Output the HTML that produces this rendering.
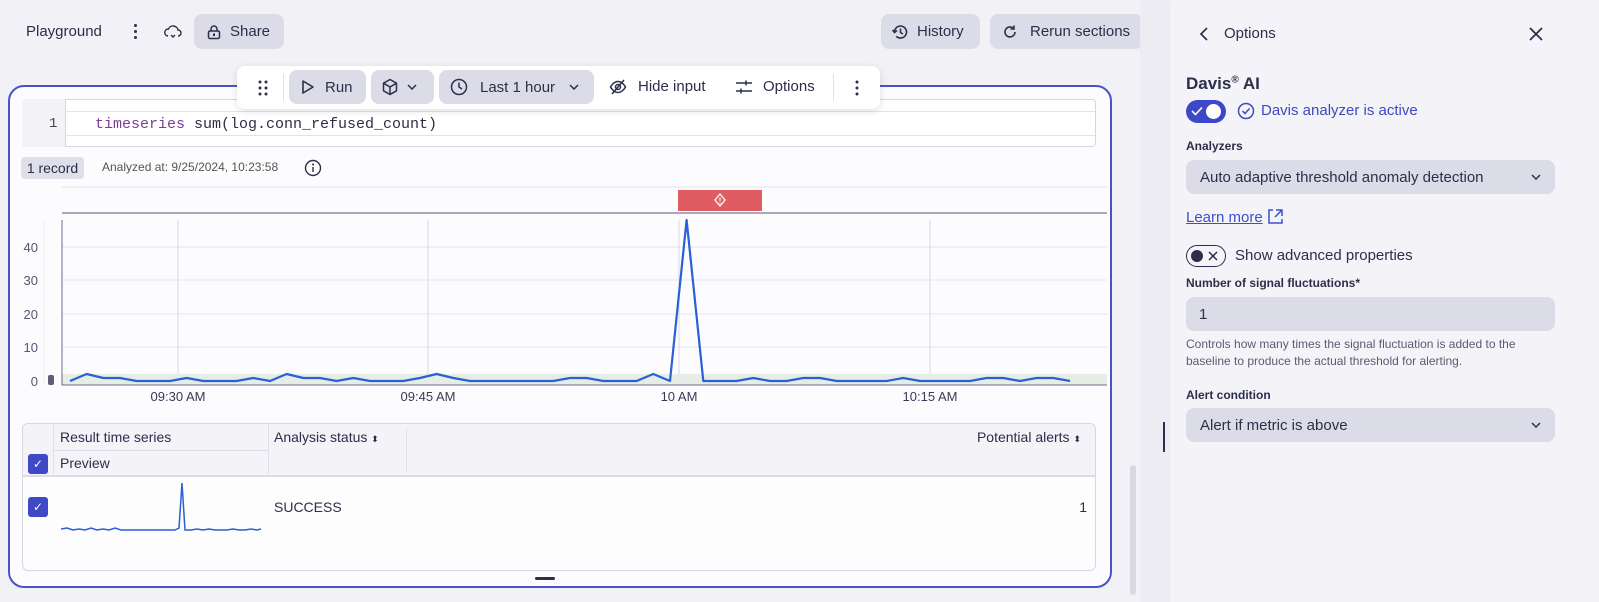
<!DOCTYPE html><html><head><meta charset="utf-8"><style>
*{box-sizing:border-box;margin:0;padding:0}
body{width:1599px;height:602px;overflow:hidden;background:#f1f1f6;font-family:"Liberation Sans",sans-serif;color:#2c2e4a;position:relative;font-size:14px}
.a{position:absolute}
.btn{position:absolute;background:#dcdce8;border-radius:8px;display:flex;align-items:center;font-size:15px;color:#2c2e4a}
svg{display:block}
.tb span{font-size:15px}
</style></head><body>
<div class="a" style="left:26px;top:23px;font-size:15px">Playground</div>
<div class="a" style="left:134px;top:24px;width:4px"><div style="width:3px;height:3px;background:#2c2e4a;border-radius:50%;margin-bottom:3px"></div><div style="width:3px;height:3px;background:#2c2e4a;border-radius:50%;margin-bottom:3px"></div><div style="width:3px;height:3px;background:#2c2e4a;border-radius:50%"></div></div>
<svg class="a" style="left:164px;top:24px" width="18" height="16" viewBox="0 0 18 16"><path d="M4 12a3.5 3.5 0 0 1 .5-7A5 5 0 0 1 14 6a3 3 0 0 1 0 6" fill="none" stroke="#2c2e4a" stroke-width="1.4"/><path d="M7 11l2 2 2-2" fill="none" stroke="#2c2e4a" stroke-width="1.4"/></svg>
<div class="btn" style="left:194px;top:14px;width:90px;height:35px"><svg style="margin:0 8px 0 12px" width="16" height="16" viewBox="0 0 16 16"><rect x="2.5" y="7" width="11" height="7.5" rx="1.5" fill="none" stroke="#2c2e4a" stroke-width="1.5"/><path d="M5 7V5a3 3 0 0 1 6 0v2" fill="none" stroke="#2c2e4a" stroke-width="1.5"/><rect x="7" y="9.5" width="2" height="2.5" fill="#2c2e4a"/></svg>Share</div>
<div class="btn" style="left:881px;top:14px;width:99px;height:35px"><svg style="margin:0 8px 0 10px" width="18" height="18" viewBox="0 0 18 18"><path d="M3.5 9a6 6 0 1 1 1.8 4.3" fill="none" stroke="#2c2e4a" stroke-width="1.6"/><path d="M1.5 7l2 2.5 2.5-2" fill="none" stroke="#2c2e4a" stroke-width="1.6"/><path d="M9.5 5.5v4l2.5 1.5" fill="none" stroke="#2c2e4a" stroke-width="1.6"/></svg>History</div>
<div class="btn" style="left:990px;top:14px;width:153px;height:35px"><svg style="margin:0 12px 0 12px" width="16" height="16" viewBox="0 0 16 16"><path d="M13 8a5 5 0 1 1-1.8-3.9" fill="none" stroke="#2c2e4a" stroke-width="1.6"/><path d="M12 1.5v3.5h-3.5" fill="none" stroke="#2c2e4a" stroke-width="1.6"/></svg>Rerun sections</div>

<!-- main card -->
<div class="a" style="left:8px;top:85px;width:1104px;height:503px;border:2px solid #4a52c8;border-radius:16px;background:#fcfcfe"></div>
<div class="a" style="left:22px;top:99px;width:1074px;height:48px;border:1px solid #d6d6e2;border-radius:4px;background:#fff"></div>
<div class="a" style="left:65px;top:99px;width:1px;height:48px;background:#d6d6e2"></div>
<div class="a" style="left:66px;top:111px;width:1029px;height:1px;background:#e2e2ec"></div>
<div class="a" style="left:66px;top:135px;width:1029px;height:1px;background:#e2e2ec"></div>
<div class="a" style="left:22px;top:99px;width:43px;height:48px;background:#f4f4f8"></div>
<div class="a" style="left:49px;top:116px;font-family:'Liberation Mono',monospace;font-size:14px;color:#444">1</div>
<div class="a" style="left:95px;top:116px;font-family:'Liberation Mono',monospace;font-size:15px;color:#2c2e4a"><span style="color:#7d3c98">timeseries</span> sum(log.conn_refused_count)</div>

<div class="a" style="left:21px;top:157px;width:63px;height:22px;background:#dfdfea;border-radius:4px;font-size:14px;line-height:22px;text-align:center">1 record</div>
<div class="a" style="left:102px;top:160px;font-size:12px;color:#555">Analyzed at: 9/25/2024, 10:23:58</div>
<svg class="a" style="left:304px;top:159px" width="18" height="18" viewBox="0 0 18 18"><circle cx="9" cy="9" r="7.5" fill="none" stroke="#2c2e4a" stroke-width="1.4"/><rect x="8.3" y="8" width="1.4" height="5" fill="#2c2e4a"/><circle cx="9" cy="5.5" r="1" fill="#2c2e4a"/></svg>

<!-- chart -->
<svg class="a" style="left:0;top:180px" width="1120" height="230" viewBox="0 180 1120 230">
<line x1="62" y1="187" x2="1107" y2="187" stroke="#e2e2ec"/>
<rect x="678" y="190" width="84" height="21" fill="#e05c63"/>
<path d="M720 194l5 6-5 6-5-6z" fill="none" stroke="#fff" stroke-width="1.3"/><line x1="720" y1="197.5" x2="720" y2="201" stroke="#fff" stroke-width="1.2"/><circle cx="720" cy="203" r=".7" fill="#fff"/>
<line x1="62" y1="213" x2="1107" y2="213" stroke="#8e8ca8" stroke-width="1.5"/>
<g stroke="#e4e4ee"><line x1="62" y1="247" x2="1107" y2="247"/><line x1="62" y1="280" x2="1107" y2="280"/><line x1="62" y1="314" x2="1107" y2="314"/><line x1="62" y1="347" x2="1107" y2="347"/></g>
<g stroke="#d8d8e4"><line x1="178" y1="220" x2="178" y2="385"/><line x1="428" y1="220" x2="428" y2="385"/><line x1="679" y1="220" x2="679" y2="385"/><line x1="930" y1="220" x2="930" y2="385"/></g>
<rect x="62" y="374" width="1045" height="11" fill="#e6ece6"/>
<line x1="62" y1="220" x2="62" y2="385" stroke="#6c6a90"/>
<line x1="62" y1="385" x2="1107" y2="385" stroke="#6c6a90"/>
<line x1="44" y1="220" x2="44" y2="385" stroke="#eee"/>
<rect x="48" y="375" width="6" height="10" rx="2" fill="#5d5d75"/>
<g font-size="13" fill="#555570" text-anchor="end" font-family="Liberation Sans"><text x="38" y="252">40</text><text x="38" y="285">30</text><text x="38" y="319">20</text><text x="38" y="352">10</text><text x="38" y="386">0</text></g>
<g font-size="13" fill="#3a3a55" text-anchor="middle" font-family="Liberation Sans"><text x="178" y="401">09:30 AM</text><text x="428" y="401">09:45 AM</text><text x="679" y="401">10 AM</text><text x="930" y="401">10:15 AM</text></g>
<polyline id="pl" fill="none" stroke="#2a5fd6" stroke-width="2.2" stroke-linejoin="round" points="70,381 86.6,374 103.3,378 120,378 136.6,381 153.3,381 170,381 186.6,378 203.3,381 220,381 236.6,381 253.3,378 270,381 286.6,374 303.3,378 320,378 336.6,381 353.3,378 370,381 386.6,381 403.3,381 420,378 436.6,374 453.3,378 470,381 486.6,381 503.3,381 520,381 536.6,381 553.3,381 570,378 586.6,378 603.3,381 620,381 636.6,381 653.3,374 670,381 686.6,220 703.3,381 720,381 736.6,381 753.3,378 770,381 786.6,381 803.3,378 820,378 836.6,381 853.3,381 870,381 886.6,381 903.3,378 920,381 936.6,381 953.3,381 970,381 986.6,378 1003.3,378 1020,381 1036.6,378 1053.3,378 1070,381"/>
</svg>

<!-- table -->
<div class="a" style="left:22px;top:423px;width:1074px;height:148px;border:1px solid #d6d6e2;border-radius:6px;background:#fdfdfe;overflow:hidden">
 <div class="a" style="left:0;top:0;width:1074px;height:53px;background:#f3f3f8;border-bottom:2px solid #dcdce6"></div>
 <div class="a" style="left:30px;top:0;width:1px;height:50px;background:#e0e0ea"></div>
 <div class="a" style="left:245px;top:0;width:1px;height:50px;background:#e0e0ea"></div>
 <div class="a" style="left:383px;top:4px;width:1px;height:44px;background:#e0e0ea"></div>
 <div class="a" style="left:31px;top:26px;width:214px;height:1px;background:#dcdce6"></div>
 <div class="a" style="left:37px;top:5px;font-size:14px">Result time series</div>
 <div class="a" style="left:37px;top:31px;font-size:14px">Preview</div>
 <div class="a" style="left:251px;top:5px;font-size:14px">Analysis status <span style="font-size:9px">⬍</span></div>
 <div class="a" style="right:14px;top:5px;font-size:14px">Potential alerts <span style="font-size:9px">⬍</span></div>
 <div class="a" style="left:5px;top:30px;width:20px;height:20px;background:#4048c8;border-radius:3px;color:#fff;font-size:12px;text-align:center;line-height:20px">✓</div>
 <div class="a" style="left:5px;top:73px;width:20px;height:20px;background:#4048c8;border-radius:3px;color:#fff;font-size:12px;text-align:center;line-height:20px">✓</div>
 <svg class="a" style="left:38px;top:58px" width="202" height="52"><polyline fill="none" stroke="#2a5fd6" stroke-width="1.5" points="0,47 6,46 12,48 18,47 24,48 30,46 36,48 42,47 48,48 54,46 60,48 66,48 72,48 78,48 84,48 90,48 96,48 102,48 108,48 114,48 118,46 121,1 124,48 130,48 136,47 142,48 148,47 154,48 160,48 166,48 172,47 178,48 184,48 190,47 196,48 200,47"/></svg>
 <div class="a" style="left:251px;top:75px;font-size:14px">SUCCESS</div>
 <div class="a" style="right:8px;top:75px;font-size:14px">1</div>
</div>
<div class="a" style="left:535px;top:577px;width:20px;height:3px;background:#2c2e4a;border-radius:2px"></div>
<div class="a" style="left:1130px;top:465px;width:6px;height:130px;background:#d8d8e0;border-radius:3px"></div>

<!-- toolbar -->
<div class="a tb" style="left:237px;top:66px;width:643px;height:43px;background:#fff;border-radius:8px;box-shadow:0 2px 8px rgba(0,0,0,.12)">
 <div class="a" style="left:21px;top:14px;width:10px"><svg width="10" height="16"><g fill="#2c2e4a"><circle cx="2" cy="2" r="1.5"/><circle cx="8" cy="2" r="1.5"/><circle cx="2" cy="8" r="1.5"/><circle cx="8" cy="8" r="1.5"/><circle cx="2" cy="14" r="1.5"/><circle cx="8" cy="14" r="1.5"/></g></svg></div>
 <div class="a" style="left:46px;top:8px;width:1px;height:27px;background:#e0e0ea"></div>
 <div class="btn" style="left:52px;top:4px;width:77px;height:34px"><svg style="margin:0 10px 0 12px" width="14" height="16"><path d="M2 2l10 6-10 6z" fill="none" stroke="#2c2e4a" stroke-width="1.6" stroke-linejoin="round"/></svg>Run</div>
 <div class="btn" style="left:134px;top:4px;width:63px;height:34px"><svg style="margin:0 8px 0 10px" width="18" height="18" viewBox="0 0 18 18"><path d="M9 1.5l6.5 3.7v7.6L9 16.5l-6.5-3.7V5.2z M2.5 5.2L9 9l6.5-3.8 M9 9v7.5" fill="none" stroke="#2c2e4a" stroke-width="1.5" stroke-linejoin="round"/></svg><svg width="10" height="6"><path d="M1 1l4 4 4-4" fill="none" stroke="#2c2e4a" stroke-width="1.5"/></svg></div>
 <div class="btn" style="left:202px;top:4px;width:155px;height:34px"><svg style="margin:0 12px 0 11px" width="18" height="18" viewBox="0 0 18 18"><circle cx="9" cy="9" r="7.5" fill="none" stroke="#2c2e4a" stroke-width="1.5"/><path d="M9 4.5V9l3 2" fill="none" stroke="#2c2e4a" stroke-width="1.5"/></svg>Last 1 hour<svg style="margin-left:14px" width="10" height="6"><path d="M1 1l4 4 4-4" fill="none" stroke="#2c2e4a" stroke-width="1.5"/></svg></div>
 <svg class="a" style="left:372px;top:12px" width="18" height="18" viewBox="0 0 18 18"><path d="M1.5 9S4.5 3.5 9 3.5 16.5 9 16.5 9 13.5 14.5 9 14.5 1.5 9 1.5 9z" fill="none" stroke="#2c2e4a" stroke-width="1.5"/><circle cx="9" cy="9" r="2.5" fill="none" stroke="#2c2e4a" stroke-width="1.5"/><path d="M3 16L15 2" stroke="#2c2e4a" stroke-width="1.5"/></svg>
 <span class="a" style="left:401px;top:12px">Hide input</span>
 <svg class="a" style="left:498px;top:13px" width="18" height="16" viewBox="0 0 18 16"><g stroke="#2c2e4a" stroke-width="1.5"><path d="M1 4h16M1 12h16"/><path d="M11 1.5v5M6 9.5v5"/></g></svg>
 <span class="a" style="left:526px;top:12px">Options</span>
 <div class="a" style="left:596px;top:8px;width:1px;height:27px;background:#e0e0ea"></div>
 <div class="a" style="left:618px;top:14px"><svg width="4" height="16"><g fill="#2c2e4a"><circle cx="2" cy="2" r="1.5"/><circle cx="2" cy="8" r="1.5"/><circle cx="2" cy="14" r="1.5"/></g></svg></div>
</div>

<!-- right panel -->
<div class="a" style="left:1140px;top:0;width:30px;height:602px;background:#ececf2"></div>
<div class="a" style="left:1170px;top:0;width:429px;height:602px;background:#f4f4f8;border-radius:14px 0 0 0"></div>
<div class="a" style="left:1163px;top:422px;width:2px;height:30px;background:#2c2e4a"></div>
<svg class="a" style="left:1199px;top:26px" width="10" height="16"><path d="M8 2L2 8l6 6" fill="none" stroke="#2c2e4a" stroke-width="1.7"/></svg>
<div class="a" style="left:1224px;top:25px;font-size:15px">Options</div>
<svg class="a" style="left:1528px;top:26px" width="16" height="16"><path d="M2 2l12 12M14 2L2 14" stroke="#2c2e4a" stroke-width="1.8"/></svg>
<div class="a" style="left:1186px;top:74px;font-size:17px;font-weight:bold">Davis<sup style="font-size:10px">®</sup> AI</div>
<div class="a" style="left:1186px;top:100px;width:40px;height:23px;border-radius:12px;background:#3d48c8"></div>
<div class="a" style="left:1206px;top:104px;width:15px;height:15px;border-radius:50%;background:#fff"></div>
<svg class="a" style="left:1191px;top:106px" width="12" height="10"><path d="M1 5l3.5 3.5L11 1.5" fill="none" stroke="#fff" stroke-width="1.6"/></svg>
<svg class="a" style="left:1237px;top:102px" width="18" height="18" viewBox="0 0 18 18"><circle cx="9" cy="9" r="7.5" fill="none" stroke="#4048c0" stroke-width="1.5"/><path d="M5.5 9l2.5 2.5 4.5-5" fill="none" stroke="#4048c0" stroke-width="1.5"/></svg>
<div class="a" style="left:1261px;top:102px;font-size:15px;color:#4048c0">Davis analyzer is active</div>
<div class="a" style="left:1186px;top:139px;font-size:12px;font-weight:bold">Analyzers</div>
<div class="btn" style="left:1186px;top:160px;width:369px;height:34px;padding-left:14px;font-size:15px">Auto adaptive threshold anomaly detection<svg class="a" style="right:14px;top:14px" width="10" height="6"><path d="M1 1l4 4 4-4" fill="none" stroke="#2c2e4a" stroke-width="1.5"/></svg></div>
<div class="a" style="left:1186px;top:209px;font-size:15px;color:#3a50d0;text-decoration:underline">Learn more</div>
<svg class="a" style="left:1267px;top:208px" width="17" height="17" viewBox="0 0 17 17"><path d="M6 2H2v13h13v-4" fill="none" stroke="#3a50d0" stroke-width="1.5"/><path d="M9 2h6v6M15 2L8 9" fill="none" stroke="#3a50d0" stroke-width="1.5"/></svg>
<div class="a" style="left:1186px;top:245px;width:40px;height:22px;border-radius:11px;border:1.5px solid #2c2e4a;background:#f4f4f8"></div>
<div class="a" style="left:1191px;top:250px;width:12px;height:12px;border-radius:50%;background:#2c2e4a"></div>
<svg class="a" style="left:1207px;top:250px" width="12" height="12"><path d="M2 2l8 8M10 2L2 10" stroke="#2c2e4a" stroke-width="1.5"/></svg>
<div class="a" style="left:1235px;top:247px;font-size:15px">Show advanced properties</div>
<div class="a" style="left:1186px;top:276px;font-size:12px;font-weight:bold">Number of signal fluctuations*</div>
<div class="btn" style="left:1186px;top:297px;width:369px;height:34px;padding-left:13px;font-size:15px">1</div>
<div class="a" style="left:1186px;top:336px;font-size:12px;line-height:17px;color:#5a5a72;width:370px">Controls how many times the signal fluctuation is added to the baseline to produce the actual threshold for alerting.</div>
<div class="a" style="left:1186px;top:388px;font-size:12px;font-weight:bold">Alert condition</div>
<div class="btn" style="left:1186px;top:408px;width:369px;height:34px;padding-left:14px;font-size:15px">Alert if metric is above<svg class="a" style="right:14px;top:14px" width="10" height="6"><path d="M1 1l4 4 4-4" fill="none" stroke="#2c2e4a" stroke-width="1.5"/></svg></div>
</body></html>
